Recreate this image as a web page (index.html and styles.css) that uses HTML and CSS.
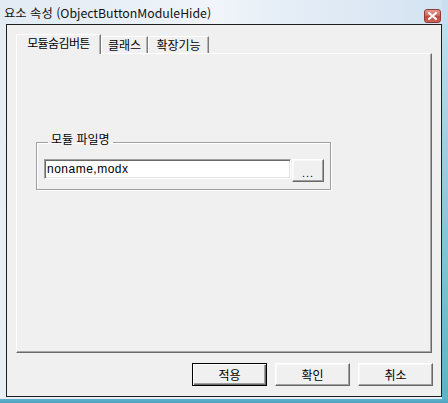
FILE: index.html
```html
<!DOCTYPE html>
<html lang="ko">
<head>
<meta charset="utf-8">
<title>요소 속성</title>
<link rel="stylesheet" href="styles.css">
</head>
<body>
<div class="window">
  <div class="titlebar">
    <span class="title">요소 속성 (ObjectButtonModuleHide)</span>
    <span class="close" aria-label="닫기">
      <svg width="9" height="8" viewBox="0 0 9 8"><path d="M1 1 L8 7 M8 1 L1 7" stroke="#fff" stroke-width="2" stroke-linecap="square"/></svg>
    </span>
  </div>
  <div class="frame">
    <div class="client">
      <div class="tabs">
        <div class="tabstrip">
          <div class="tab active tab-module">모듈숨김버튼</div>
          <div class="tab tab-class">클래스</div>
          <div class="tab tab-ext">확장기능</div>
        </div>
        <div class="panel">
          <fieldset class="group">
            <legend>모듈 파일명</legend>
            <div class="row">
              <div class="input">noname,modx</div>
              <button class="btn browse">...</button>
            </div>
          </fieldset>
        </div>
      </div>
      <div class="buttons">
        <button class="btn default">적용</button>
        <button class="btn">확인</button>
        <button class="btn">취소</button>
      </div>
    </div>
  </div>
</div>
</body>
</html>
```
FILE: styles.css
```css
* { box-sizing: border-box; }
html, body { margin: 0; padding: 0; }
body {
  width: 448px;
  height: 403px;
  overflow: hidden;
  font-family: "Noto Sans CJK KR", "Noto Sans", sans-serif;
  font-size: 12px;
  color: #000;
}
.window {
  width: 448px;
  height: 403px;
  display: flex;
  flex-direction: column;
}
.titlebar {
  height: 24px;
  flex: none;
  display: flex;
  align-items: flex-start;
  padding: 0 7px 0 4px;
  background:
    linear-gradient(90deg, #c9dff0 0, #c9dff0 100%) right top / 6px 100% no-repeat,
    linear-gradient(90deg, #e2eaf3 0%, #e9f0f7 30%, #f1f5fa 48%, #e6eef7 62%, #dbe7f3 85%, #d2e3f2 100%);
}
.title {
  font-size: 12.3px;
  line-height: 16px;
  margin-top: 5px;
  color: #111;
  white-space: nowrap;
}
.close {
  margin-left: auto;
  margin-top: 9px;
  width: 17px;
  height: 14px;
  border-radius: 3px;
  border: 1px solid #8c3a35;
  background: linear-gradient(180deg, #e19b92 0%, #d06a5f 45%, #be4a3f 55%, #c9675b 100%);
  display: flex;
  align-items: center;
  justify-content: center;
}
.close svg { display: block; }
.frame {
  flex: 1;
  padding: 0 6px 6px 6px;
  background:
    linear-gradient(180deg, #5fafc8, #4ea2bf) left bottom / 100% 4px no-repeat,
    linear-gradient(180deg, #bde0ee 0%, #8dc7da 50%, #5fb0c8 100%) right top / 6px 100% no-repeat,
    linear-gradient(180deg, #e6edf5, #e8eff6);
}
.client {
  height: 373px;
  border: 1px solid #1e1e1e;
  background: #f0f0f0;
  padding: 9px 8px 0 9px;
  display: flex;
  flex-direction: column;
}
.tabs {
  width: 416px;
  display: flex;
  flex-direction: column;
}
.tabstrip {
  display: flex;
  align-items: flex-end;
  height: 20px;
  position: relative;
  z-index: 1;
}
.tab {
  height: 17px;
  border-top: 1px solid #fff;
  border-left: 1px solid #fff;
  border-right: 1px solid #7a7a7a;
  box-shadow: inset -1px 0 0 #b4b4b4;
  text-align: center;
  font-size: 12px;
  line-height: 14px;
  padding-top: 1px;
  background: #f0f0f0;
  margin-bottom: 1px;
  white-space: nowrap;
}
.tab.active {
  height: 20px;
  padding-top: 1px;
  margin-bottom: 0;
}
.tab-module { width: 85px; letter-spacing: -0.6px; }
.tab-class { width: 47px; }
.tab-ext { width: 61px; }
.panel {
  height: 300px;
  margin-top: -1px;
  border-top: 1px solid #fff;
  border-left: 1px solid #fff;
  border-right: 1px solid #6a6a6a;
  border-bottom: 1px solid #6a6a6a;
  box-shadow: inset -1px -1px 0 #a8a8a8;
  padding: 78px 0 0 19px;
}
.group {
  width: 295px;
  margin: 0;
  padding: 0 6px 7px 7px;
  border: 1px solid #a0a0a0;
  box-shadow: inset 1px 1px 0 #fff, 1px 1px 0 #fff;
  min-width: 0;
}
.group legend {
  margin-left: 4px;
  padding: 0 3px 6px 3px;
  font-size: 12px;
  line-height: 14px;
}
.row {
  display: flex;
  align-items: flex-start;
  gap: 1px;
  padding-top: 7px;
}
.input {
  width: 247px;
  height: 20px;
  background: #fff;
  border: 1px solid;
  border-color: #a0a0a0 #fff #fff #a0a0a0;
  box-shadow: inset 1px 1px 0 #696969, inset -1px -1px 0 #e3e3e3;
  font-family: "Liberation Sans", "Noto Sans CJK KR", sans-serif;
  font-size: 12px;
  letter-spacing: 0.5px;
  line-height: 18px;
  padding-left: 2px;
  padding-top: 0;
}
.btn {
  margin: 0;
  padding: 0;
  width: 75px;
  height: 23px;
  background: #f0f0f0;
  border: 1px solid;
  border-color: #fff #696969 #696969 #fff;
  box-shadow: inset -1px -1px 0 #a0a0a0, inset 1px 1px 0 #f8f8f8;
  font-family: "Noto Sans CJK KR", "Noto Sans", sans-serif;
  font-size: 12px;
  line-height: 14px;
  color: #000;
}
.btn.default {
  border: 1px solid #000;
  box-shadow: inset 1px 1px 0 #fff, inset -1px -1px 0 #696969, inset -2px -2px 0 #a0a0a0;
}
.btn.browse {
  width: 32px;
  font-family: "Liberation Sans", sans-serif;
  font-size: 11px;
  line-height: 12px;
  padding-top: 4px;
  letter-spacing: 1px;
}
.buttons {
  display: flex;
  justify-content: flex-end;
  gap: 8px;
  margin-top: 10px;
}
```
